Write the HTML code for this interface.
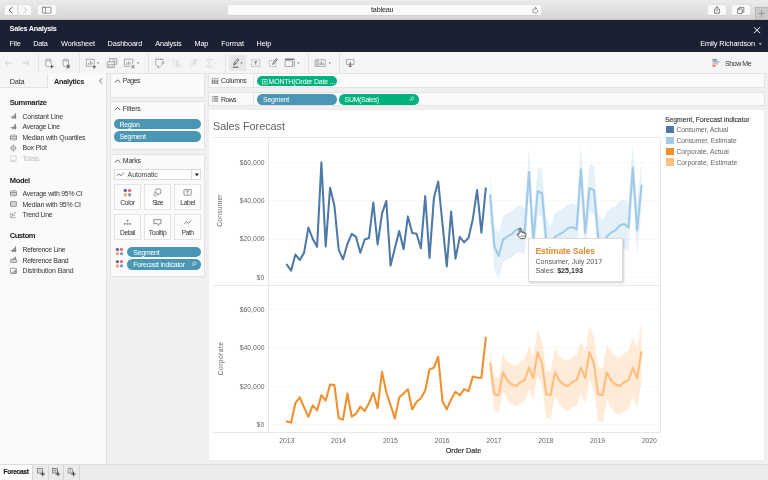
<!DOCTYPE html>
<html>
<head>
<meta charset="utf-8">
<title>tableau</title>
<style>
*{box-sizing:border-box;margin:0;padding:0}
html,body{width:768px;height:480px;overflow:hidden;background:#f0f0f0;font-family:"Liberation Sans",sans-serif;color:#333}
.abs{position:absolute}
#root{will-change:transform;position:relative;width:768px;height:480px;overflow:hidden;background:#f0f0f0}
/* browser chrome */
#chrome{left:0;top:0;width:768px;height:20px;background:linear-gradient(#ebebeb,#d7d7d7);border-bottom:1px solid #c6c6c6}
.bbtn{position:absolute;top:4.25px;height:11.9px;background:#f9f9f9;border:1px solid #e1e1e1;border-bottom-color:#d0d0d0;border-radius:3px}
#url{left:227px;top:4.25px;width:315px;height:11.9px;background:#fbfbfb;border-radius:3px;border:1px solid #e2e2e2;border-bottom-color:#d2d2d2;font-size:7.2px;line-height:10.8px;text-align:center;color:#222}
/* dark header */
#hdr{left:0;top:20px;width:768px;height:32px;background:#1c2033}
#hdr .t{position:absolute;color:#fff;font-size:7.3px;line-height:9px;white-space:nowrap}
/* toolbar */
#tb{left:0;top:52px;width:768px;height:22px;background:#f5f5f5;border-bottom:1px solid #e2e2e2}
.sep{position:absolute;top:53.5px;width:1px;height:19px;background:#e3e3e3}
/* left panel */
#left{left:0;top:73px;width:107px;height:391px;background:#fafafa;border-right:1px solid #e2e2e2}
.lt{position:absolute;left:22.5px;font-size:6.9px;line-height:9px;color:#333;white-space:nowrap}
.lh{position:absolute;left:9.7px;font-size:7.6px;line-height:9px;font-weight:bold;color:#222;white-space:nowrap}
.li{position:absolute;left:10px;width:7px;height:7px}
/* cards */
.card{position:absolute;background:#fafafa;border:1px solid #e4e4e4}
.ct{position:absolute;font-size:7px;line-height:9px;color:#333;white-space:nowrap}
.pill{position:absolute;height:10.6px;border-radius:5.3px;color:#fff;font-size:7px;line-height:11.6px;white-space:nowrap;overflow:hidden}
.blue{background:#4a97b3}
.green{background:#00b180}
.mbtn{position:absolute;width:26.6px;height:26.2px;background:#fcfcfc;border:1px solid #e4e4e4;font-size:6.7px;color:#333;text-align:center}
.mbtn span{position:absolute;left:0;right:0;bottom:1.3px;line-height:8px}
/* viz */
#viz{left:208px;top:109px;width:557px;height:352px;background:#fff;border:1px solid #ececec}
.ax{position:absolute;font-size:6.6px;line-height:9px;color:#666;white-space:nowrap}
/* bottom */
#bot{left:0;top:464px;width:768px;height:16px;background:#ebebeb;border-top:1px solid #dcdcdc}
svg{overflow:visible}
</style>
</head>
<body>
<div id="root">

<!-- BROWSER CHROME -->
<div id="chrome" class="abs"></div>
<div class="bbtn" style="left:4px;width:14px;border-radius:2.5px 0 0 2.5px"></div>
<div class="bbtn" style="left:17.5px;width:14px;border-radius:0 2.5px 2.5px 0"></div>
<div class="bbtn" style="left:37px;width:19.5px"></div>
<div id="url" class="abs"><span style="display:inline-block;margin-right:4.6px;letter-spacing:-0.185px">tableau</span></div>
<div class="bbtn" style="left:707px;width:20px"></div>
<div class="bbtn" style="left:731px;width:20px"></div>
<div class="abs" style="left:755px;top:7px;width:13px;height:13px;background:#c9c9c9;border:0.5px solid #b8b8b8;border-right:none"></div>
<svg class="abs" style="left:0;top:0" width="768" height="20" viewBox="0 0 768 20" fill="none" stroke="#555" stroke-width="0.9" stroke-linecap="round" stroke-linejoin="round">
  <path d="M12.2 7.2 L9 10.1 L12.2 13" stroke="#444"/>
  <path d="M23.6 7.2 L26.8 10.1 L23.6 13" stroke="#bdbdbd"/>
  <rect x="42.4" y="7.2" width="8.6" height="6" rx="0.6" stroke-width="0.7" stroke="#666"/>
  <line x1="45.4" y1="7.2" x2="45.4" y2="13.2" stroke-width="0.7" stroke="#666"/>
  <path d="M536.3 8.3 A2.5 2.5 0 1 0 537.8 10.3" stroke="#666" stroke-width="0.7"/>
  <path d="M535.2 7.2 L536.6 8.4 L535.4 9.6" stroke="#666" stroke-width="0.7"/>
  <path d="M715.3 9 H714.6 V13.3 H719.4 V9 H718.7" stroke-width="0.7"/>
  <path d="M717 11 V6.8 M715.7 8 L717 6.7 L718.3 8" stroke-width="0.7"/>
  <rect x="737.6" y="9" width="4.6" height="4.6" rx="0.5" stroke-width="0.7"/>
  <path d="M739.2 9 V7.4 H743.8 V12 H742.2" stroke-width="0.7"/>
  <path d="M758.6 13.5 H764.4 M761.5 10.6 V16.4" stroke="#8a8a8a" stroke-width="0.8"/>
</svg>

<!-- DARK HEADER -->
<div id="hdr" class="abs">
  <div class="t" style="left:9.6px;top:4.1px;font-weight:bold;letter-spacing:-0.275px">Sales Analysis</div>
  <div class="t" style="left:9.6px;top:18.8px;letter-spacing:-0.191px">File</div>
  <div class="t" style="left:33.2px;top:18.8px;letter-spacing:-0.230px">Data</div>
  <div class="t" style="left:61px;top:18.8px;letter-spacing:-0.083px">Worksheet</div>
  <div class="t" style="left:107.6px;top:18.8px;letter-spacing:-0.134px">Dashboard</div>
  <div class="t" style="left:155.2px;top:18.8px;letter-spacing:-0.084px">Analysis</div>
  <div class="t" style="left:194.6px;top:18.8px;letter-spacing:-0.234px">Map</div>
  <div class="t" style="left:221.2px;top:18.8px;letter-spacing:-0.060px">Format</div>
  <div class="t" style="left:256.6px;top:18.8px;letter-spacing:-0.066px">Help</div>
  <div class="t" style="left:700.2px;top:18.8px;letter-spacing:-0.127px">Emily Richardson</div>
  <svg class="abs" style="left:0;top:0" width="768" height="32" viewBox="0 20 768 32">
    <path d="M754 27.2 L760 33.2 M760 27.2 L754 33.2" stroke="#fff" stroke-width="1" fill="none"/>
    <path d="M758.8 43.2 H761.6 L760.2 45 Z" fill="#e8e8e8"/>
  </svg>
</div>

<!-- TOOLBAR -->
<div id="tb" class="abs"></div>
<div class="abs" style="left:229px;top:54.5px;width:17px;height:16.5px;background:#e7e7e7"></div>
<div class="sep" style="left:37.5px"></div>
<div class="sep" style="left:79px"></div>
<div class="sep" style="left:147.5px"></div>
<div class="sep" style="left:224.5px"></div>
<div class="sep" style="left:307.5px"></div>
<div class="sep" style="left:338.5px"></div>

<svg class="abs" style="left:0;top:52px" width="768" height="22" viewBox="0 52 768 22" fill="none" stroke="#858585" stroke-width="0.65" stroke-linejoin="round">
  <!-- back/forward -->
  <g stroke="#cfcfcf" stroke-width="0.9"><path d="M11.6 63 H5 M7.6 60.4 L5 63 L7.6 65.6"/><path d="M22.4 63 H29 M26.4 60.4 L29 63 L26.4 65.6"/></g>
  <!-- db plus -->
  <path d="M45.8 60 V66 c0 0.9 5.2 0.9 5.2 0 V60"/><ellipse cx="48.4" cy="60" rx="2.6" ry="0.9"/>
  <rect x="49" y="64" width="5" height="5" fill="#f5f5f5" stroke="none"/>
  <path d="M49.7 66.6 H53.5 M51.6 64.7 V68.5" stroke="#444" stroke-width="0.8"/>
  <!-- db pause -->
  <path d="M63.2 60 V66 c0 0.9 5.2 0.9 5.2 0 V60"/><ellipse cx="65.8" cy="60" rx="2.6" ry="0.9"/>
  <rect x="66.4" y="64.4" width="3.6" height="4" fill="#777" stroke="#f5f5f5" stroke-width="0.5"/>
  <!-- new worksheet -->
  <rect x="86.4" y="59.2" width="7.8" height="7.2"/><path d="M88.6 64.8 V63 M90.3 64.8 V61 M92 64.8 V62.2" stroke-width="0.8"/>
  <rect x="91.6" y="64.4" width="5" height="5" fill="#f5f5f5" stroke="none"/>
  <path d="M92.2 66.8 H96.2 M94.2 64.8 V68.8" stroke="#444" stroke-width="0.8"/>
  <path d="M97 62.4 H99.2 L98.1 63.8Z" fill="#444" stroke="none"/>
  <!-- duplicate -->
  <rect x="109.6" y="58.6" width="7.2" height="5.6"/><path d="M113.2 58.6 V64.2 M111 62.6 V61.6 M115 62.6 V60.4" stroke-width="0.6"/>
  <rect x="107.2" y="62" width="7.2" height="5.6" fill="#f5f5f5"/><path d="M107.2 64.6 H114.4" stroke-width="0.6"/><path d="M108.4 66.2 H110.2 M111.4 66.2 H113.2" stroke-width="0.8"/>
  <!-- clear -->
  <rect x="124.4" y="59.2" width="8.4" height="7.2"/><path d="M126.6 64.8 V63 M128.3 64.8 V61.4 M130 64.8 V62.4" stroke-width="0.8"/>
  <rect x="130.4" y="64" width="5" height="5" fill="#f5f5f5" stroke="none"/>
  <path d="M131.4 65 L134.6 68.2 M134.6 65 L131.4 68.2" stroke="#444" stroke-width="0.8"/>
  <path d="M137 62.4 H139.2 L138.1 63.8Z" fill="#444" stroke="none"/>
  <!-- swap -->
  <path d="M155.4 59.4 H163.4" stroke-dasharray="1.6 0.7" stroke-width="1.1"/>
  <path d="M155.6 60.6 V63.6 c0 2 1.6 3.4 3.4 3.4 M163 60.6 V62 c0 2 -1.2 3.6 -2.6 4.4"/>
  <path d="M157.8 65.6 L159.4 67 L157.8 68.2 M161.4 63.6 L163 62 L164.2 63.8" stroke-width="0.7"/>
  <!-- sort asc/desc (disabled) -->
  <g stroke="#d2d2d2"><path d="M173.4 59 V67 M172.2 60.4 L173.4 59 L174.6 60.4" stroke-dasharray="1 0.6"/><path d="M176 66.8 H180.4 V65 H176Z M176 64.6 H178.8 V62.8 H176Z M176 62.4 H177.6 V60.6 H176Z" stroke-width="0.6"/>
  <path d="M190.6 59 V67 M189.4 65.6 L190.6 67 L191.8 65.6" stroke-dasharray="1 0.6"/><path d="M193.2 59.4 H197.6 V61.2 H193.2Z M193.2 61.6 H196 V63.4 H193.2Z M193.2 63.8 H194.8 V65.6 H193.2Z" stroke-width="0.6"/>
  <path d="M212 60.8 V59.4 H206.8 L209.8 63.2 L206.8 67 H212 V65.6" stroke-width="0.8"/><path d="M214.4 62.4 H216.4 L215.4 63.8Z" fill="#d2d2d2" stroke="none"/></g>
  <!-- highlight pen -->
  <path d="M233.6 65 L234.4 62.6 L237.4 58.8 L238.8 59.8 L236 63.8 Z M234.4 62.6 L236 63.8" stroke="#444" stroke-width="0.7"/>
  <path d="M232.8 67.2 H238.4" stroke="#444" stroke-width="0.9"/>
  <path d="M240.4 62.4 H242.6 L241.5 63.8Z" fill="#444" stroke="none"/>
  <!-- T label -->
  <rect x="251.4" y="59.8" width="8.4" height="6.6" stroke-dasharray="1.2 0.7" stroke-width="0.6"/>
  <path d="M254.2 61.8 H257.2 M255.7 61.8 V64.8" stroke="#555" stroke-width="0.7"/>
  <!-- pin / annotate -->
  <path d="M274 60.6 H269.4 V66.6 H275.6 V63.4" stroke-dasharray="1.2 0.7" stroke-width="0.6"/>
  <path d="M272.6 64.4 L273.4 62.6 L276.4 58.6 L277.4 59.4 L274.4 63.4 Z" stroke="#444" stroke-width="0.7"/>
  <!-- fit -->
  <path d="M285 59.2 H294.4" stroke-width="1.2" stroke="#555"/><rect x="285" y="60.8" width="7.4" height="5.8"/><path d="M294.2 60.8 V66.6" stroke-width="0.9"/>
  <path d="M297.4 62.4 H299.6 L298.5 63.8Z" fill="#444" stroke="none"/>
  <!-- show cards -->
  <rect x="315.2" y="59.8" width="10" height="6.6"/><path d="M318 59.8 V66.4" stroke-width="0.6"/><path d="M316 61.4 H317.4 M316 63 H317.4 M316 64.6 H317.4" stroke-width="0.7"/>
  <path d="M320 65 V62.6 M321.6 65 V61.2 M323.2 65 V63.2" stroke-width="0.9"/>
  <path d="M328.6 62.4 H330.8 L329.7 63.8Z" fill="#444" stroke="none"/>
  <!-- presentation -->
  <path d="M346.4 59.6 H354 V64.4 H346.4Z"/><path d="M350.2 62 V67 M348.8 65.6 L350.2 67 L351.6 65.6" stroke="#333" stroke-width="0.8"/>
  <!-- show me icon -->
  <g stroke="none"><rect x="712.4" y="59.2" width="4.6" height="1.3" fill="#5b6a9a"/><rect x="712.4" y="61.2" width="7" height="1.3" fill="#7aa7d6"/><rect x="712.4" y="63.2" width="5.6" height="1.3" fill="#f0a56a"/><rect x="712.4" y="65.2" width="3.4" height="1.3" fill="#e0556b"/></g>
</svg>

<div class="abs" style="left:725px;top:58.5px;font-size:7px;line-height:9px;color:#333;white-space:nowrap;letter-spacing:-0.420px">Show Me</div>

<!-- LEFT PANEL -->
<div id="left" class="abs"></div>

<!-- tabs -->
<div class="abs" style="left:0;top:74px;width:47.5px;height:14px;background:#f6f6f6;border-right:1px solid #e4e4e4;border-bottom:1px solid #e4e4e4"></div>
<div class="abs" style="left:9.8px;top:77px;font-size:7.3px;line-height:9px;color:#333;letter-spacing:-0.230px">Data</div>
<div class="abs" style="left:54px;top:77px;font-size:7.3px;line-height:9px;color:#222;font-weight:bold;letter-spacing:-0.273px">Analytics</div>
<svg class="abs" style="left:98px;top:77px" width="6" height="8" viewBox="0 0 6 8"><path d="M4 1.2 L1.6 4 L4 6.8" fill="none" stroke="#555" stroke-width="0.8"/></svg>

<div class="lh" style="top:98px;letter-spacing:-0.392px">Summarize</div>
<div class="lt" style="top:111.5px;letter-spacing:-0.164px">Constant Line</div>
<div class="lt" style="top:122.4px;letter-spacing:-0.265px">Average Line</div>
<div class="lt" style="top:133px;letter-spacing:-0.160px">Median with Quartiles</div>
<div class="lt" style="top:143.2px;letter-spacing:-0.184px">Box Plot</div>
<div class="lt" style="top:154.2px;color:#bdbdbd;letter-spacing:-0.217px">Totals</div>
<div class="lh" style="top:175.8px;letter-spacing:-0.348px">Model</div>
<div class="lt" style="top:188.9px;letter-spacing:-0.223px">Average with 95% CI</div>
<div class="lt" style="top:199.6px;letter-spacing:-0.171px">Median with 95% CI</div>
<div class="lt" style="top:210.1px;letter-spacing:-0.289px">Trend Line</div>
<div class="lh" style="top:231.2px;letter-spacing:-0.478px">Custom</div>
<div class="lt" style="top:245px;letter-spacing:-0.274px">Reference Line</div>
<div class="lt" style="top:255.6px;letter-spacing:-0.287px">Reference Band</div>
<div class="lt" style="top:266.2px;letter-spacing:-0.093px">Distribution Band</div>

<svg class="abs" style="left:0;top:0" width="110" height="290" viewBox="0 0 110 290" fill="none" stroke="#858585" stroke-width="0.7">
  <!-- constant line -->
  <g transform="translate(10,112.6)" stroke="#7c7c7c"><path d="M2.6 6.1 V3.8 M4 6.1 V2.2 M5.4 6.1 V0.7" stroke-width="1.1"/><path d="M0.2 4.4 H6.8" stroke-width="0.6"/></g>
  <!-- average line -->
  <g transform="translate(10,123.2)" stroke="#7c7c7c"><path d="M2.6 6.1 V3.8 M4 6.1 V2.2 M5.4 6.1 V0.7" stroke-width="1.1"/><path d="M0.2 4.4 H6.8" stroke-width="0.6"/></g>
  <!-- median with quartiles -->
  <g transform="translate(10,134)" stroke="#7c7c7c"><rect x="0.5" y="1.1" width="6" height="4.9" rx="0.7" stroke-width="0.7"/><path d="M0 2.7 H7 M0 4.4 H7" stroke-width="0.8"/></g>
  <!-- box plot -->
  <g transform="translate(10,144.6)"><circle cx="3.3" cy="3.5" r="2.4"/><path d="M0.2 3.5 H6.4 M3.3 0 V7" stroke-width="0.6"/></g>
  <!-- totals -->
  <g transform="translate(10,155.2)" stroke="#c8c8c8"><rect x="0.5" y="0.8" width="5.6" height="4.2"/><path d="M0 6.4 H6.6"/></g>
  <!-- avg 95 ci -->
  <g transform="translate(10,190)" stroke="#7c7c7c"><rect x="0.5" y="0.9" width="6" height="4.9" rx="0.7" stroke-width="0.7"/><path d="M0 2.5 H7 M0 4.2 H7" stroke-width="0.8"/><path d="M3.6 0.3 V1.6" stroke-width="0.6"/></g>
  <!-- median 95 ci -->
  <g transform="translate(10,200.6)" stroke="#7c7c7c"><rect x="0.5" y="0.9" width="6" height="4.9" rx="0.8" stroke-width="0.7" fill="#cfcfcf"/><path d="M3.5 1.2 V5.5" stroke="#f0f0f0" stroke-width="0.5"/><path d="M0 2.4 H1.2 M0 4.3 H1.2" stroke-width="0.5"/></g>
  <!-- trend line -->
  <g transform="translate(10,211.2)"><path d="M0.7 1.8 V6.4 H5.6" stroke-width="0.7"/><path d="M1.4 5.6 L4.8 1.6" stroke-width="0.6"/><circle cx="2.4" cy="2.8" r="0.5" stroke-width="0.5"/><circle cx="4" cy="4.4" r="0.5" stroke-width="0.5"/><circle cx="5" cy="1.4" r="0.45" stroke-width="0.5"/></g>
  <!-- reference line -->
  <g transform="translate(10,245.9)" stroke="#7c7c7c"><path d="M2.6 6.1 V3.8 M4 6.1 V2.2 M5.4 6.1 V0.7" stroke-width="1.1"/><path d="M0.2 4.4 H6.8" stroke-width="0.6"/></g>
  <!-- reference band -->
  <g transform="translate(10,256.6)" stroke="#7c7c7c"><path d="M2.8 3 V1.9 M4.2 3 V1 M5.4 3 V0.2" stroke-width="1"/><rect x="0.5" y="2.8" width="6.2" height="3.1" rx="0.5" fill="#cfcfcf" stroke-width="0.7"/></g>
  <!-- distribution band -->
  <g transform="translate(10,267.2)" stroke="#7c7c7c"><rect x="0.5" y="1.1" width="6" height="4.9" rx="0.5" stroke-width="0.7"/><path d="M3 5.4 V4.4 M4.2 5.4 V3.4 M5.4 5.4 V2.4" stroke-width="0.9"/><path d="M0.5 6.2 H6.5" stroke-width="0.7"/></g>
</svg>


<!-- CARDS -->

<div class="card" style="left:110.4px;top:73px;width:94.2px;height:25px"></div>
<div class="card" style="left:110.4px;top:101.4px;width:94.2px;height:49px"></div>
<div class="card" style="left:110.4px;top:153.6px;width:94.2px;height:123.8px"></div>
<svg class="abs" style="left:0;top:0" width="210" height="170" viewBox="0 0 210 170" fill="none" stroke="#555" stroke-width="0.8">
  <path d="M115 82.4 L117.6 79.8 L120.2 82.4" stroke-width="0.95"/>
  <path d="M115 110 L117.6 107.4 L120.2 110" stroke-width="0.95"/>
  <path d="M115 162.4 L117.6 159.8 L120.2 162.4" stroke-width="0.95"/>
</svg>
<div class="ct" style="left:122.8px;top:76.2px;letter-spacing:-0.532px">Pages</div>
<div class="ct" style="left:122.8px;top:104.2px;letter-spacing:-0.166px">Filters</div>
<div class="ct" style="left:122.8px;top:156.2px;letter-spacing:-0.233px">Marks</div>
<div class="pill blue" style="left:113.6px;top:118.9px;width:87.6px;padding-left:6px;letter-spacing:-0.381px">Region</div>
<div class="pill blue" style="left:113.6px;top:131.4px;width:87.6px;padding-left:6px;letter-spacing:-0.290px">Segment</div>
<!-- dropdown -->
<div class="abs" style="left:113.6px;top:168.8px;width:87.4px;height:11px;background:#fff;border:1px solid #dcdcdc"></div>
<div class="abs" style="left:191px;top:168.8px;width:1px;height:11px;background:#dcdcdc"></div>
<svg class="abs" style="left:116px;top:170.5px" width="9" height="8" viewBox="0 0 9 8"><path d="M0.8 5 L3 2.8 L5 4.8 L8 1.6" fill="none" stroke="#555" stroke-width="0.8"/></svg>
<div class="ct" style="left:127.6px;top:169.9px;color:#444;letter-spacing:-0.125px">Automatic</div>
<svg class="abs" style="left:193.6px;top:172.6px" width="6" height="4" viewBox="0 0 6 4"><path d="M0.6 0.4 H5 L2.8 3.2Z" fill="#333"/></svg>
<!-- mark buttons -->
<div class="mbtn" style="left:114.2px;top:183.5px"><span style="letter-spacing:-0.337px">Color</span></div>
<div class="mbtn" style="left:144.3px;top:183.5px"><span style="letter-spacing:-0.554px">Size</span></div>
<div class="mbtn" style="left:174.3px;top:183.5px"><span style="letter-spacing:-0.355px">Label</span></div>
<div class="mbtn" style="left:114.2px;top:213.6px"><span style="letter-spacing:-0.318px">Detail</span></div>
<div class="mbtn" style="left:144.3px;top:213.6px"><span style="letter-spacing:-0.263px">Tooltip</span></div>
<div class="mbtn" style="left:174.3px;top:213.6px"><span style="letter-spacing:-0.516px">Path</span></div>
<svg class="abs" style="left:0;top:0" width="210" height="280" viewBox="0 0 210 280" fill="none" stroke="#666" stroke-width="0.7">
  <!-- color dots -->
  <g stroke="none">
    <circle cx="125.3" cy="190.4" r="1.7" fill="#71618f"/><circle cx="129.6" cy="190.4" r="1.7" fill="#ee6b80"/>
    <circle cx="125.3" cy="194.8" r="1.7" fill="#eba868"/><circle cx="129.6" cy="194.8" r="1.7" fill="#7a9fd0"/>
  </g>
  <!-- size -->
  <circle cx="158.2" cy="191.5" r="2.9"/><circle cx="155.4" cy="194.3" r="1.6" fill="#fff" stroke-width="0.6"/>
  <!-- label -->
  <rect x="184" y="189.6" width="7.2" height="5.6" rx="0.6"/><path d="M186.2 191.2 H189 M187.6 191.2 V194" stroke-width="0.6"/>
  <!-- detail -->
  <g stroke="none" fill="#777"><circle cx="127.5" cy="220.6" r="0.95"/><circle cx="124.8" cy="223.8" r="0.9"/><circle cx="127.5" cy="223.8" r="0.9"/><circle cx="130.2" cy="223.8" r="0.9"/><rect x="124.8" y="223.5" width="5.4" height="0.6" fill="#aaa"/></g>
  <!-- tooltip -->
  <path d="M153.8 219.6 H161 V223.6 H159.4 L158.4 225.4 L157.4 223.6 H153.8 Z" stroke-linejoin="round"/>
  <!-- path -->
  <path d="M184.4 224 L186.6 221.6 L188.4 223.4 L191.2 220.4" stroke-width="0.8"/>
  <!-- small color dots next to pills -->
  <g stroke="none">
    <circle cx="117.4" cy="249.5" r="1.65" fill="#71618f"/><circle cx="121.5" cy="249.5" r="1.65" fill="#ee6b80"/>
    <circle cx="117.4" cy="253.7" r="1.65" fill="#eba868"/><circle cx="121.5" cy="253.7" r="1.65" fill="#7a9fd0"/>
    <circle cx="117.4" cy="261.7" r="1.65" fill="#71618f"/><circle cx="121.5" cy="261.7" r="1.65" fill="#ee6b80"/>
    <circle cx="117.4" cy="265.9" r="1.65" fill="#eba868"/><circle cx="121.5" cy="265.9" r="1.65" fill="#7a9fd0"/>
  </g>
</svg>
<div class="pill blue" style="left:127.3px;top:246.8px;width:73.8px;padding-left:6px;letter-spacing:-0.290px">Segment</div>
<div class="pill blue" style="left:127.3px;top:259px;width:73.8px;padding-left:6px;letter-spacing:-0.224px">Forecast indicator</div>
<svg class="abs" style="left:191.4px;top:261.4px" width="6" height="6" viewBox="0 0 6 6"><circle cx="3.4" cy="2.4" r="1.5" fill="none" stroke="#fff" stroke-width="0.6"/><path d="M2.2 3.6 L0.8 5" stroke="#fff" stroke-width="0.7"/></svg>


<!-- SHELVES -->

<div class="card" style="left:208px;top:73px;width:556.6px;height:15px"></div>
<div class="card" style="left:208px;top:92px;width:556.6px;height:14.4px"></div>
<div class="abs" style="left:253px;top:73px;width:1px;height:15px;background:#e4e4e4"></div>
<div class="abs" style="left:253px;top:92px;width:1px;height:14.4px;background:#e4e4e4"></div>
<svg class="abs" style="left:0;top:0" width="260" height="110" viewBox="0 0 260 110" stroke="#555" stroke-width="0.8" fill="none">
  <path d="M212.4 79.6 V84 M214.2 79.6 V84 M216 79.6 V84 M217.8 79.6 V84" stroke-width="0.9"/><path d="M212.4 77.8 V78.8 M214.2 77.8 V78.8 M216 77.8 V78.8 M217.8 77.8 V78.8" stroke-width="0.9" stroke="#666"/>
  <path d="M213.4 96.8 H218.2 M213.4 98.9 H218.2 M213.4 101 H218.2" stroke-width="0.9"/><path d="M211.8 96.8 H212.8 M211.8 98.9 H212.8 M211.8 101 H212.8" stroke-width="0.9" stroke="#666"/>
</svg>
<div class="ct" style="left:221px;top:76px;letter-spacing:-0.304px">Columns</div>
<div class="ct" style="left:221px;top:94.6px;letter-spacing:-0.629px">Rows</div>
<div class="pill green" style="left:257px;top:75.8px;width:80.2px;padding-left:11.5px;letter-spacing:-0.195px">MONTH(Order Date ...</div>
<svg class="abs" style="left:262.1px;top:78.6px" width="6" height="6" viewBox="0 0 6 6"><rect x="0.5" y="0.5" width="4.6" height="4.6" fill="none" stroke="#fff" stroke-width="0.6"/><path d="M1.6 2.8 H4 M2.8 1.6 V4" stroke="#fff" stroke-width="0.6"/></svg>
<div class="pill blue" style="left:257px;top:94px;width:80.2px;padding-left:6px;letter-spacing:-0.290px">Segment</div>
<div class="pill green" style="left:339px;top:94px;width:80.2px;padding-left:5.6px;letter-spacing:-0.348px">SUM(Sales)</div>
<svg class="abs" style="left:409px;top:96.4px" width="6" height="6" viewBox="0 0 6 6"><circle cx="3.4" cy="2.4" r="1.5" fill="none" stroke="#fff" stroke-width="0.6"/><path d="M2.2 3.6 L0.8 5" stroke="#fff" stroke-width="0.7"/></svg>


<!-- VIZ -->
<div id="viz" class="abs"></div>

<div class="abs" style="left:213px;top:119.6px;font-size:10.9px;line-height:13px;color:#626262;white-space:nowrap;letter-spacing:-0.046px">Sales Forecast</div>
<div class="abs" style="left:665px;top:115.4px;font-size:6.9px;line-height:9px;color:#333;white-space:nowrap;-webkit-text-stroke:0.1px #333;letter-spacing:-0.062px">Segment, Forecast indicator</div>
<div class="abs" style="left:666px;top:126px;width:7.6px;height:7.4px;background:#4e79a7"></div>
<div class="abs" style="left:666px;top:136.8px;width:7.6px;height:7.4px;background:#a0cbe8"></div>
<div class="abs" style="left:666px;top:147.5px;width:7.6px;height:7.4px;background:#f28e2b"></div>
<div class="abs" style="left:666px;top:158.2px;width:7.6px;height:7.4px;background:#ffbe7d"></div>
<div class="ax" style="left:676.4px;top:125.4px;font-size:6.8px;letter-spacing:-0.099px">Consumer, Actual</div>
<div class="ax" style="left:676.4px;top:136.1px;font-size:6.8px;letter-spacing:-0.050px">Consumer, Estimate</div>
<div class="ax" style="left:676.4px;top:146.8px;font-size:6.8px;letter-spacing:-0.002px">Corporate, Actual</div>
<div class="ax" style="left:676.4px;top:157.5px;font-size:6.8px;letter-spacing:0.018px">Corporate, Estimate</div>
<div class="ax" style="left:199.2px;top:206.4px;width:40px;text-align:center;transform:rotate(-90deg);font-size:6.8px"><span style="letter-spacing:0.143px">Consumer</span></div>
<div class="ax" style="left:199.6px;top:353.6px;width:40px;text-align:center;transform:rotate(-90deg);font-size:6.8px"><span style="letter-spacing:0.374px">Corporate</span></div>
<div class="ax" style="left:443.5px;top:445.9px;width:40px;text-align:center;color:#333;font-size:7.2px;-webkit-text-stroke:0.2px #333"><span style="letter-spacing:0.004px">Order Date</span></div>

<svg class="abs" style="left:0;top:0" width="768" height="480" viewBox="0 0 768 480">
<defs>
<clipPath id="c1"><rect x="269" y="138" width="391" height="147"/></clipPath>
<clipPath id="c2"><rect x="269" y="286" width="391" height="146"/></clipPath>
</defs>
<g stroke="#f8f8f8" stroke-width="1" shape-rendering="crispEdges">
<line x1="269" x2="660" y1="162.5" y2="162.5"/><line x1="269" x2="660" y1="200.5" y2="200.5"/><line x1="269" x2="660" y1="239.5" y2="239.5"/><line x1="269" x2="660" y1="277.5" y2="277.5"/>
<line x1="269" x2="660" y1="309.5" y2="309.5"/><line x1="269" x2="660" y1="347.5" y2="347.5"/><line x1="269" x2="660" y1="386.5" y2="386.5"/><line x1="269" x2="660" y1="424.5" y2="424.5"/>
</g>
<g stroke="#e7e7e7" stroke-width="1" shape-rendering="crispEdges" fill="none">
<line x1="213" x2="660" y1="137.5" y2="137.5"/>
<line x1="213" x2="660" y1="285.5" y2="285.5"/>
<line x1="213" x2="660" y1="432.5" y2="432.5"/>
<line x1="268.5" x2="268.5" y1="138" y2="432"/>
<line x1="660.5" x2="660.5" y1="138" y2="433"/>
</g>
<g clip-path="url(#c1)">
<path d="M490.1 176.1 L494.4 223.8 L498.7 233.0 L503.1 216.3 L507.4 213.2 L511.7 210.9 L516.0 206.7 L520.4 205.1 L524.7 208.3 L529.0 148.5 L533.3 217.3 L537.7 167.5 L542.0 169.5 L546.3 217.6 L550.6 226.5 L555.0 213.0 L559.3 210.4 L563.6 207.9 L567.9 204.4 L572.2 203.0 L576.6 205.4 L580.9 145.6 L585.2 208.8 L589.5 163.9 L593.9 165.9 L598.2 212.8 L602.5 221.1 L606.9 212.1 L611.2 208.1 L615.5 206.0 L619.8 201.1 L624.2 199.6 L628.5 202.9 L632.8 143.1 L637.1 205.8 L641.5 161.1 L641.5 210.1 L637.1 254.8 L632.8 191.9 L628.5 251.7 L624.2 248.4 L619.8 249.9 L615.5 254.6 L611.2 256.7 L606.9 260.7 L602.5 269.5 L598.2 261.2 L593.9 214.3 L589.5 212.1 L585.2 257.0 L580.9 193.6 L576.6 253.4 L572.2 251.0 L567.9 252.2 L563.6 255.7 L559.3 258.2 L555.0 260.6 L550.6 274.1 L546.3 265.0 L542.0 216.9 L537.7 214.7 L533.3 264.5 L529.0 195.5 L524.7 255.3 L520.4 251.9 L516.0 253.3 L511.7 257.5 L507.4 259.6 L503.1 262.5 L498.7 279.0 L494.4 269.4 L490.1 215.1Z" fill="#a0cbe8" fill-opacity="0.28"/>
<path d="M490.1 195.6 L494.4 246.6 L498.7 256.0 L503.1 239.4 L507.4 236.4 L511.7 234.2 L516.0 230.0 L520.4 228.5 L524.7 231.8 L529.0 172.0 L533.3 240.9 L537.7 191.1 L542.0 193.2 L546.3 241.3 L550.6 250.3 L555.0 236.8 L559.3 234.3 L563.6 231.8 L567.9 228.3 L572.2 227.0 L576.6 229.4 L580.9 169.6 L585.2 232.9 L589.5 188.0 L593.9 190.1 L598.2 237.0 L602.5 245.3 L606.9 236.4 L611.2 232.4 L615.5 230.3 L619.8 225.5 L624.2 224.0 L628.5 227.3 L632.8 167.5 L637.1 230.3 L641.5 185.6" fill="none" stroke="#a0cbe8" stroke-width="2.1" stroke-linejoin="round" stroke-linecap="round"/>
<path d="M286.8 264.5 L291.1 270.7 L295.4 254.6 L299.8 260.0 L304.1 252.7 L308.4 227.6 L312.8 238.9 L317.1 246.8 L321.4 162.4 L325.7 246.5 L330.1 187.7 L334.4 205.7 L338.7 249.6 L343.0 259.4 L347.4 244.0 L351.7 233.8 L356.0 236.9 L360.3 252.7 L364.7 239.5 L369.0 238.0 L373.3 202.6 L377.6 244.5 L382.0 213.6 L386.3 200.9 L390.6 265.6 L394.9 247.9 L399.2 231.0 L403.6 249.3 L407.9 216.4 L412.2 233.0 L416.6 233.8 L420.9 248.2 L425.2 196.1 L429.5 258.0 L433.9 198.1 L438.2 181.5 L442.5 224.0 L446.8 266.5 L451.1 211.6 L455.5 258.6 L459.8 236.9 L464.1 242.3 L468.5 238.0 L472.8 219.2 L477.1 190.0 L481.4 232.7 L485.8 188.3" fill="none" stroke="#4e79a7" stroke-width="2.05" stroke-linejoin="round" stroke-linecap="round"/>
</g>
<g clip-path="url(#c2)">
<path d="M490.1 348.7 L494.4 377.4 L498.7 377.5 L503.1 353.9 L507.4 361.5 L511.7 364.8 L516.0 365.9 L520.4 361.5 L524.7 358.9 L529.0 346.0 L533.3 355.9 L537.7 329.5 L542.0 340.8 L546.3 370.9 L550.6 371.5 L555.0 348.3 L559.3 356.2 L563.6 359.8 L567.9 361.0 L572.2 356.8 L576.6 354.4 L580.9 341.6 L585.2 351.6 L589.5 325.3 L593.9 336.7 L598.2 366.9 L602.5 367.7 L606.9 344.5 L611.2 352.5 L615.5 356.1 L619.8 357.4 L624.2 353.3 L628.5 350.9 L632.8 338.1 L637.1 348.3 L641.5 322.0 L641.5 382.0 L637.1 407.7 L632.8 397.1 L628.5 409.3 L624.2 411.1 L619.8 414.8 L615.5 412.9 L611.2 408.7 L606.9 400.1 L602.5 422.7 L598.2 421.5 L593.9 390.7 L589.5 378.7 L585.2 404.4 L580.9 393.6 L576.6 405.8 L572.2 407.6 L567.9 411.2 L563.6 409.2 L559.3 405.0 L555.0 396.3 L550.6 418.9 L546.3 417.5 L542.0 386.6 L537.7 374.5 L533.3 400.1 L529.0 389.2 L524.7 401.3 L520.4 402.9 L516.0 406.3 L511.7 404.2 L507.4 399.7 L503.1 390.7 L498.7 412.9 L494.4 411.0 L490.1 378.7Z" fill="#ffbe7d" fill-opacity="0.30"/>
<path d="M490.1 363.7 L494.4 394.2 L498.7 395.2 L503.1 372.3 L507.4 380.6 L511.7 384.5 L516.0 386.1 L520.4 382.2 L524.7 380.1 L529.0 367.6 L533.3 378.0 L537.7 352.0 L542.0 363.7 L546.3 394.2 L550.6 395.2 L555.0 372.3 L559.3 380.6 L563.6 384.5 L567.9 386.1 L572.2 382.2 L576.6 380.1 L580.9 367.6 L585.2 378.0 L589.5 352.0 L593.9 363.7 L598.2 394.2 L602.5 395.2 L606.9 372.3 L611.2 380.6 L615.5 384.5 L619.8 386.1 L624.2 382.2 L628.5 380.1 L632.8 367.6 L637.1 378.0 L641.5 352.0" fill="none" stroke="#ffbe7d" stroke-width="2.1" stroke-linejoin="round" stroke-linecap="round"/>
<path d="M286.8 421.4 L291.1 422.6 L295.4 403.0 L299.8 397.4 L304.1 407.3 L308.4 416.9 L312.8 405.4 L317.1 410.4 L321.4 395.1 L325.7 400.6 L330.1 384.5 L334.4 385.0 L338.7 418.1 L343.0 419.7 L347.4 393.4 L351.7 416.6 L356.0 413.7 L360.3 406.6 L364.7 410.9 L369.0 403.0 L373.3 392.7 L377.6 408.2 L382.0 371.8 L386.3 392.2 L390.6 405.4 L394.9 418.5 L399.2 397.4 L403.6 393.4 L407.9 389.1 L412.2 409.4 L416.6 401.8 L420.9 398.2 L425.2 390.5 L429.5 369.4 L433.9 367.7 L438.2 356.7 L442.5 401.3 L446.8 409.4 L451.1 399.4 L455.5 391.7 L459.8 395.3 L464.1 389.1 L468.5 391.2 L472.8 376.6 L477.1 377.8 L481.4 377.8 L485.8 337.8" fill="none" stroke="#f28e2b" stroke-width="2.05" stroke-linejoin="round" stroke-linecap="round"/>
</g>
</svg>
<div class="ax" style="right:503.4px;top:157.6px;font-size:6.8px;letter-spacing:0.046px">$60,000</div>
<div class="ax" style="right:503.4px;top:195.6px;font-size:6.8px;letter-spacing:0.046px">$40,000</div>
<div class="ax" style="right:503.4px;top:234.4px;font-size:6.8px;letter-spacing:0.046px">$20,000</div>
<div class="ax" style="right:503.4px;top:272.8px;font-size:6.8px;letter-spacing:0.269px">$0</div>
<div class="ax" style="right:503.4px;top:304.6px;font-size:6.8px;letter-spacing:0.046px">$60,000</div>
<div class="ax" style="right:503.4px;top:343.2px;font-size:6.8px;letter-spacing:0.046px">$40,000</div>
<div class="ax" style="right:503.4px;top:381.6px;font-size:6.8px;letter-spacing:0.046px">$20,000</div>
<div class="ax" style="right:503.4px;top:420.1px;font-size:6.8px;letter-spacing:0.269px">$0</div>

<div class="ax" style="left:271.7px;width:30px;text-align:center;top:436.2px;font-size:6.8px"><span style="letter-spacing:-0.081px">2013</span></div>
<div class="ax" style="left:323.5px;width:30px;text-align:center;top:436.2px;font-size:6.8px"><span style="letter-spacing:-0.081px">2014</span></div>
<div class="ax" style="left:375.3px;width:30px;text-align:center;top:436.2px;font-size:6.8px"><span style="letter-spacing:-0.081px">2015</span></div>
<div class="ax" style="left:427.1px;width:30px;text-align:center;top:436.2px;font-size:6.8px"><span style="letter-spacing:-0.081px">2016</span></div>
<div class="ax" style="left:478.9px;width:30px;text-align:center;top:436.2px;font-size:6.8px"><span style="letter-spacing:-0.081px">2017</span></div>
<div class="ax" style="left:530.7px;width:30px;text-align:center;top:436.2px;font-size:6.8px"><span style="letter-spacing:-0.081px">2018</span></div>
<div class="ax" style="left:582.5px;width:30px;text-align:center;top:436.2px;font-size:6.8px"><span style="letter-spacing:-0.081px">2019</span></div>
<div class="ax" style="left:634.3px;width:30px;text-align:center;top:436.2px;font-size:6.8px"><span style="letter-spacing:-0.081px">2020</span></div>


<div class="abs" style="left:528px;top:238px;width:95.4px;height:44px;background:#fff;border:1px solid #dcdcdc;box-shadow:0.5px 1px 2px rgba(0,0,0,0.2)"></div>
<div class="abs" style="left:535.4px;top:245.7px;font-size:8.7px;line-height:11px;font-weight:bold;color:#de8b33;white-space:nowrap;letter-spacing:-0.132px">Estimate Sales</div>
<div class="abs" style="left:535.4px;top:257.9px;font-size:7.1px;line-height:9px;color:#555;white-space:nowrap;letter-spacing:0.003px">Consumer, July 2017</div>
<div class="abs" style="left:535.4px;top:267px;font-size:7.1px;line-height:9px;color:#555;white-space:nowrap;letter-spacing:0.011px">Sales: <b style="color:#333">$25,193</b></div>
<svg class="abs" style="left:516px;top:227px" width="12" height="13" viewBox="0 0 12 13">
  <path d="M3.1 7.4 V2 a0.85 0.85 0 0 1 1.7 0 V5.4 a0.85 0.85 0 0 1 1.7 0.1 V5.9 a0.85 0.85 0 0 1 1.7 0.2 V6.5 a0.8 0.8 0 0 1 1.6 0.2 V8.8 c0 1.8 -1 2.8 -2.5 2.8 H5.5 c-0.9 0 -1.5 -0.4 -2.1 -1.3 L1.3 7.8 c-0.5 -0.9 0.5 -1.5 1.2 -0.8 Z" fill="#fff" stroke="#222" stroke-width="0.75" stroke-linejoin="round"/>
  <path d="M5.2 8.2 V10 M6.7 8.2 V10 M8.1 8.2 V10" stroke="#333" stroke-width="0.45"/>
</svg>


<!-- BOTTOM -->
<div id="bot" class="abs"></div>

<div class="abs" style="left:0;top:464.5px;width:32.2px;height:16px;background:#fff"></div>
<div class="abs" style="left:3.4px;top:467.3px;font-size:6.6px;line-height:9px;font-weight:bold;color:#222;-webkit-text-stroke:0.15px #222;letter-spacing:-0.275px">Forecast</div>
<div class="abs" style="left:32px;top:465px;width:1px;height:15px;background:#d6d6d6"></div>
<div class="abs" style="left:48.3px;top:465px;width:1px;height:15px;background:#d6d6d6"></div>
<div class="abs" style="left:63.4px;top:465px;width:1px;height:15px;background:#d6d6d6"></div>
<div class="abs" style="left:79.2px;top:465px;width:1px;height:15px;background:#d6d6d6"></div>
<svg class="abs" style="left:0;top:464px" width="90" height="16" viewBox="0 464 90 16" fill="none" stroke="#666" stroke-width="0.7">
  <rect x="37.4" y="468.4" width="5" height="4.6"/><path d="M39 471.4 V470.4 M40 471.4 V469.8 M41 471.4 V470.8" stroke-width="0.5"/><path d="M40.4 474 H45 M42.7 471.7 V476.3" stroke="#333" stroke-width="0.9"/>
  <rect x="52.6" y="468.4" width="5" height="4.6"/><path d="M52.6 470.6 H57.6 M55 468.4 V473" stroke-width="0.5"/><path d="M55.6 474 H60.2 M57.9 471.7 V476.3" stroke="#333" stroke-width="0.9"/>
  <path d="M68 468.8 L70.2 468.2 L72.4 468.8 V473.4 L70.2 472.8 L68 473.4 Z M70.2 468.2 V472.8" stroke-width="0.6"/><path d="M71.2 474 H75.8 M73.5 471.7 V476.3" stroke="#333" stroke-width="0.9"/>
</svg>


</div>
</body>
</html>
